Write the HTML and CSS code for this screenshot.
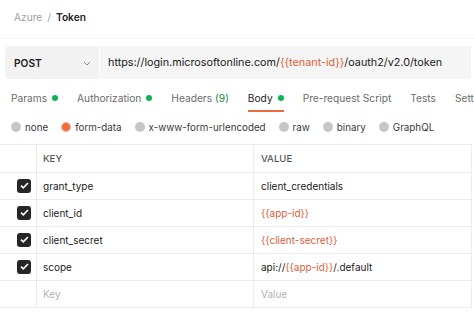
FILE: index.html
```html
<!DOCTYPE html>
<html>
<head>
<meta charset="utf-8">
<link rel="stylesheet" href="styles.css">
</head>
<body>
<div class="page">
  <div class="crumbs"><span class="crumb-parent">Azure</span><span class="crumb-sep">/</span><span class="crumb-current">Token</span></div>
  <div class="reqbar">
    <div class="method"><span>POST</span>
      <svg class="chev" width="8" height="5" viewBox="0 0 8 5"><path d="M1 1l3 3 3-3" fill="none" stroke="#8a8a8a" stroke-width="1"/></svg>
    </div>
    <div class="url">https://login.microsoftonline.com/<span class="var">{{tenant-id}}</span>/oauth2/v2.0/token</div>
  </div>
  <div class="tabs">
    <div class="tab">Params<span class="dot"></span></div>
    <div class="tab">Authorization<span class="dot"></span></div>
    <div class="tab">Headers <span class="count">(9)</span></div>
    <div class="tab active">Body<span class="dot"></span></div>
    <div class="tab">Pre-request Script</div>
    <div class="tab">Tests</div>
    <div class="tab">Settings</div>
  </div>
  <div class="radios">
    <div class="radio"><span class="circle"></span>none</div>
    <div class="radio"><span class="circle on"></span>form-data</div>
    <div class="radio"><span class="circle"></span>x-www-form-urlencoded</div>
    <div class="radio"><span class="circle"></span>raw</div>
    <div class="radio"><span class="circle"></span>binary</div>
    <div class="radio"><span class="circle"></span>GraphQL</div>
  </div>
  <div class="table">
    <div class="row head"><div class="c0"></div><div class="c1">KEY</div><div class="c2">VALUE</div></div>
    <div class="row"><div class="c0"><span class="cb"><svg width="9" height="7" viewBox="0 0 9 7"><path d="M1 3.6l2.3 2.2L8 1" fill="none" stroke="#fff" stroke-width="1.6"/></svg></span></div><div class="c1">grant_type</div><div class="c2">client_credentials</div></div>
    <div class="row"><div class="c0"><span class="cb"><svg width="9" height="7" viewBox="0 0 9 7"><path d="M1 3.6l2.3 2.2L8 1" fill="none" stroke="#fff" stroke-width="1.6"/></svg></span></div><div class="c1">client_id</div><div class="c2"><span class="var">{{app-id}}</span></div></div>
    <div class="row"><div class="c0"><span class="cb"><svg width="9" height="7" viewBox="0 0 9 7"><path d="M1 3.6l2.3 2.2L8 1" fill="none" stroke="#fff" stroke-width="1.6"/></svg></span></div><div class="c1">client_secret</div><div class="c2"><span class="var">{{client-secret}}</span></div></div>
    <div class="row"><div class="c0"><span class="cb"><svg width="9" height="7" viewBox="0 0 9 7"><path d="M1 3.6l2.3 2.2L8 1" fill="none" stroke="#fff" stroke-width="1.6"/></svg></span></div><div class="c1">scope</div><div class="c2">api://<span class="var">{{app-id}}</span>/.default</div></div>
    <div class="row"><div class="c0"></div><div class="c1 ph">Key</div><div class="c2 ph">Value</div></div>
  </div>
</div>
</body>
</html>
```
FILE: styles.css
```css
html, body { margin: 0; padding: 0; background: #fff; }
body { width: 474px; height: 313px; overflow: hidden; font-family: Inter, "Noto Sans", sans-serif; font-size: 10px; color: #212121; }
.page { display: flex; flex-direction: column; }
.crumbs { height: 39px; display: flex; align-items: center; padding-left: 14px; gap: 5px; border-bottom: 1px solid #f2f2f2; box-sizing: border-box; font-size: 10.2px; padding-bottom: 4px; }
.crumb-parent { color: #a0a0a0; }
.crumb-sep { color: #9a9a9a; }
.crumb-current { color: #212121; font-weight: 600; }
.reqbar { display: flex; margin: 7px 3px 0 5px; height: 33px; }
.method { width: 94px; background: #f2f2f2; border-radius: 4px 0 0 4px; display: flex; align-items: center; justify-content: space-between; padding: 0 8px 0 9px; box-sizing: border-box; font-weight: 600; font-size: 10.2px; color: #212121; }
.chev { margin-top: 1px; }
.url { flex: 1; margin-left: 1px; background: #f5f5f5; display: flex; align-items: center; padding-left: 8px; color: #212121; white-space: nowrap; overflow: hidden; font-size: 10.8px; }
.var { color: #e0603a; }
.tabs { display: flex; height: 34px; padding: 4px 0 0 11px; box-sizing: border-box; white-space: nowrap; }
.tab { display: flex; align-items: center; color: #6b6b6b; margin-right: 19px; position: relative; font-size: 10.2px; }
.tab .count { color: #0a8a3a; margin-left: 3px; }
.tab.active { color: #212121; }
.tab.active::after { content: ""; position: absolute; left: 0; right: 0; bottom: 1px; height: 2px; background: #f26b3a; }
.dot { width: 6px; height: 6px; border-radius: 50%; background: #0cb350; margin-left: 5px; }
.radios { display: flex; height: 28px; align-items: center; padding-left: 11px; white-space: nowrap; }
.radio { display: flex; align-items: center; color: #3a3a3a; margin-right: 13px; font-size: 9.8px; }
.circle { width: 10px; height: 10px; border-radius: 50%; background: #c6c6c6; margin-right: 4px; box-sizing: border-box; }
.circle.on { background: #f26b3a; border: 1.5px solid #f7b49c; }
.table { margin-top: 3px; border-top: 1px solid #ececec; width: 472px; }
.row { display: grid; grid-template-columns: 36px 217px 1fr; height: 27px; border-bottom: 1px solid #ececec; box-sizing: border-box; }
.row.head { height: 28px; }
.row > div { display: flex; align-items: center; padding-bottom: 1px; }
.c1 { border-left: 1px solid #ececec; padding-left: 6px; }
.c2 { border-left: 1px solid #ececec; border-right: 1px solid #ececec; padding-left: 7px; }
.head .c1, .head .c2 { color: #555; font-weight: 500; font-size: 9.6px; }
.c0 { justify-content: flex-end; padding-right: 5px; }
.cb { width: 14px; height: 14px; background: #262626; border-radius: 3px; display: flex; align-items: center; justify-content: center; }
.ph { color: #b4b4b4; }
```
